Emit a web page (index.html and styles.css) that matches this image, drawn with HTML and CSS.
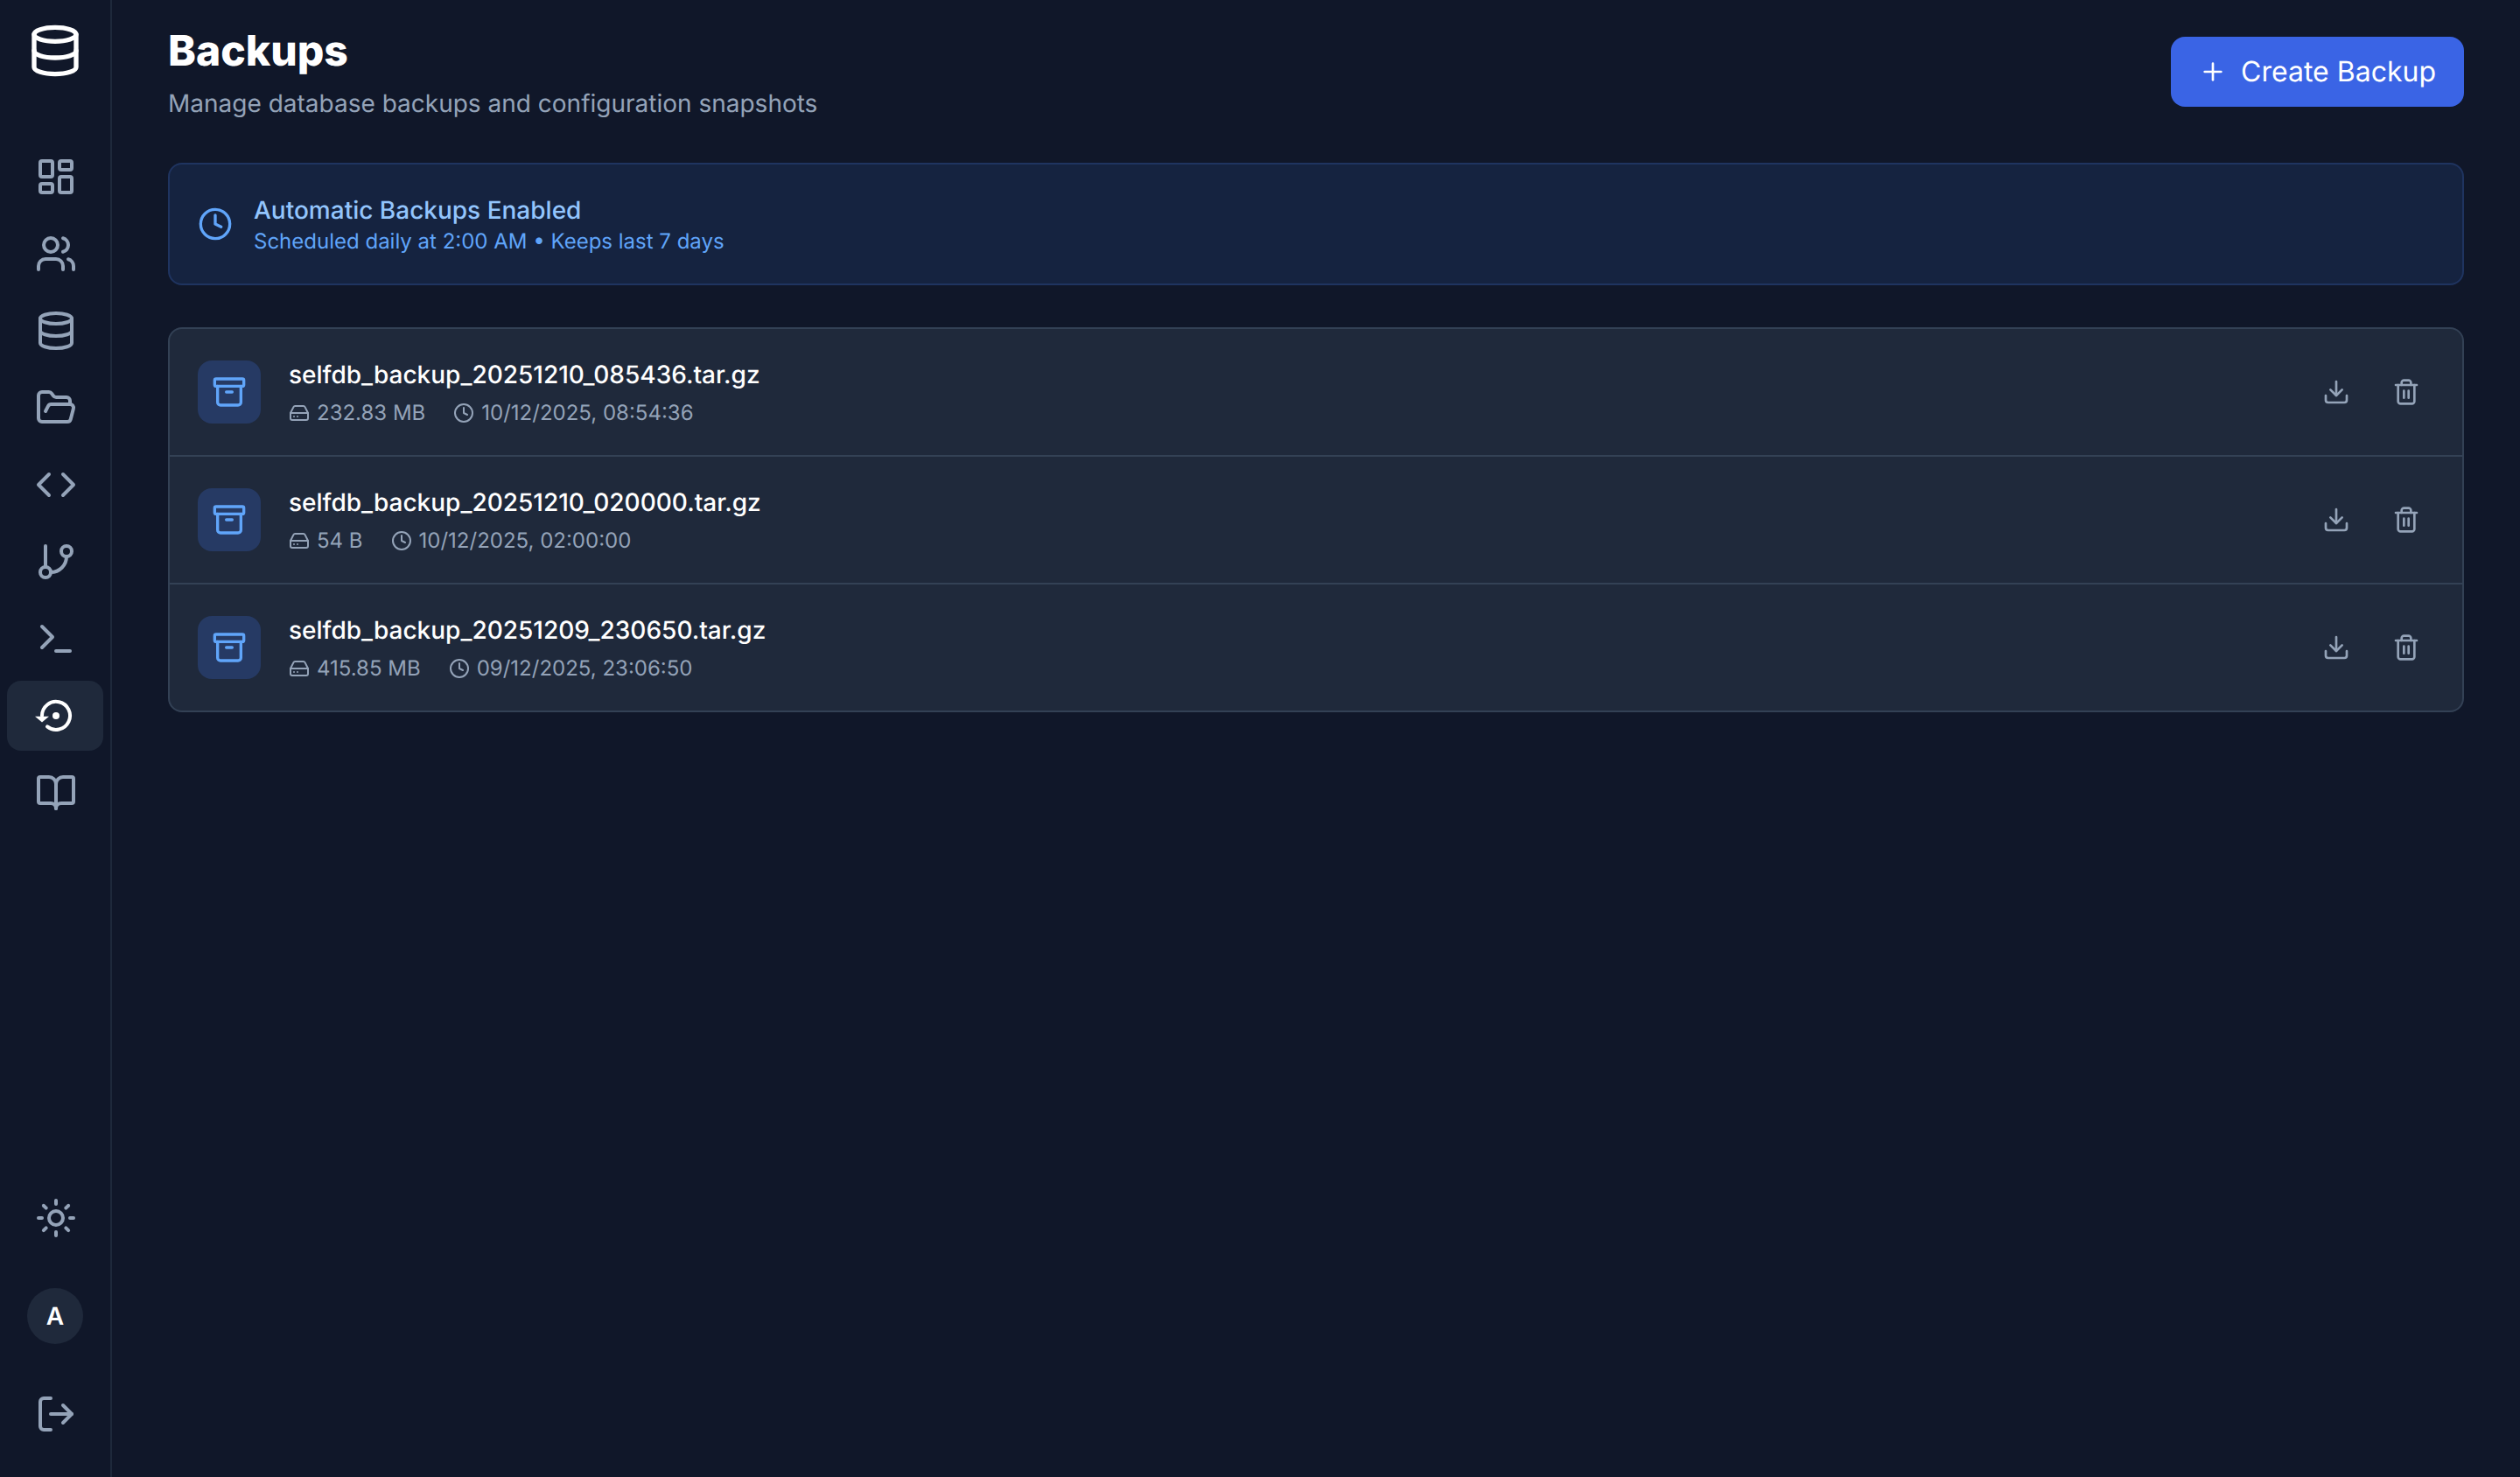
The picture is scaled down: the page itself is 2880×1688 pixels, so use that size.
FILE: index.html
```html
<!DOCTYPE html>
<html lang="en">
<head>
<meta charset="utf-8">
<title>Backups</title>
<link rel="stylesheet" href="styles.css">
</head>
<body>
<div class="app">
  <aside class="sidebar">
    <div class="logo">
      <svg class="ic ic-64" viewBox="0 0 24 24"><ellipse cx="12" cy="5" rx="9" ry="3"/><path d="M3 5v14a9 3 0 0 0 18 0V5"/><path d="M3 12a9 3 0 0 0 18 0"/></svg>
    </div>
    <nav class="nav">
      <a class="nav-btn"><svg class="ic ic-48" viewBox="0 0 24 24"><rect x="3" y="3" width="7" height="9" rx="1"/><rect x="14" y="3" width="7" height="5" rx="1"/><rect x="14" y="12" width="7" height="9" rx="1"/><rect x="3" y="16" width="7" height="5" rx="1"/></svg></a>
      <a class="nav-btn"><svg class="ic ic-48" viewBox="0 0 24 24"><path d="M16 21v-2a4 4 0 0 0-4-4H6a4 4 0 0 0-4 4v2"/><circle cx="9" cy="7" r="4"/><path d="M22 21v-2a4 4 0 0 0-3-3.87"/><path d="M16 3.13a4 4 0 0 1 0 7.75"/></svg></a>
      <a class="nav-btn"><svg class="ic ic-48" viewBox="0 0 24 24"><ellipse cx="12" cy="5" rx="9" ry="3"/><path d="M3 5v14a9 3 0 0 0 18 0V5"/><path d="M3 12a9 3 0 0 0 18 0"/></svg></a>
      <a class="nav-btn"><svg class="ic ic-48" viewBox="0 0 24 24"><path d="m6 14 1.5-2.9A2 2 0 0 1 9.24 10H20a2 2 0 0 1 1.94 2.5l-1.54 6a2 2 0 0 1-1.95 1.5H4a2 2 0 0 1-2-2V5a2 2 0 0 1 2-2h3.9a2 2 0 0 1 1.69.9l.81 1.2a2 2 0 0 0 1.67.9H18a2 2 0 0 1 2 2v2"/></svg></a>
      <a class="nav-btn"><svg class="ic ic-48" viewBox="0 0 24 24"><path d="m16 18 6-6-6-6"/><path d="m8 6-6 6 6 6"/></svg></a>
      <a class="nav-btn"><svg class="ic ic-48" viewBox="0 0 24 24"><path d="M6 3v12"/><circle cx="18" cy="6" r="3"/><circle cx="6" cy="18" r="3"/><path d="M18 9a9 9 0 0 1-9 9"/></svg></a>
      <a class="nav-btn"><svg class="ic ic-48" viewBox="0 0 24 24"><path d="m4 17 6-6-6-6"/><path d="M12 19h8"/></svg></a>
      <a class="nav-btn active"><svg class="ic ic-48" viewBox="0 0 24 24"><path d="M7 18.2A8 8 0 1 0 4 12"/><path class="fill" d="M0 12.4h8l-4 3.4z"/><circle class="fill" cx="12" cy="12" r="2"/></svg></a>
      <a class="nav-btn"><svg class="ic ic-48" viewBox="0 0 24 24"><path d="M12 7v14"/><path d="M3 18a1 1 0 0 1-1-1V4a1 1 0 0 1 1-1h5a4 4 0 0 1 4 4 4 4 0 0 1 4-4h5a1 1 0 0 1 1 1v13a1 1 0 0 1-1 1h-6a3 3 0 0 0-3 3 3 3 0 0 0-3-3z"/></svg></a>
    </nav>
    <div class="side-foot">
      <a class="nav-btn"><svg class="ic ic-48" viewBox="0 0 24 24"><circle cx="12" cy="12" r="4"/><path d="M12 2v2"/><path d="M12 20v2"/><path d="m4.93 4.93 1.41 1.41"/><path d="m17.66 17.66 1.41 1.41"/><path d="M2 12h2"/><path d="M20 12h2"/><path d="m6.34 17.66-1.41 1.41"/><path d="m19.07 4.93-1.41 1.41"/></svg></a>
      <div class="avatar-wrap"><div class="avatar">A</div></div>
      <a class="nav-btn"><svg class="ic ic-48" viewBox="0 0 24 24"><path d="M9 21H5a2 2 0 0 1-2-2V5a2 2 0 0 1 2-2h4"/><path d="m16 17 5-5-5-5"/><path d="M21 12H9"/></svg></a>
    </div>
  </aside>
  <main class="main">
    <header class="head">
      <div class="head-text">
        <h1 class="title">Backups</h1>
        <p class="subtitle">Manage database backups and configuration snapshots</p>
      </div>
      <button class="primary"><svg class="ic ic-32" viewBox="0 0 24 24"><path d="M5 12h14"/><path d="M12 5v14"/></svg><span>Create Backup</span></button>
    </header>
    <section class="banner">
      <svg class="ic ic-40 blue" viewBox="0 0 24 24"><circle cx="12" cy="12" r="10"/><path d="M12 6v6l4 2"/></svg>
      <div class="banner-text">
        <div class="banner-title">Automatic Backups Enabled</div>
        <div class="banner-sub">Scheduled daily at 2:00 AM • Keeps last 7 days</div>
      </div>
    </section>
    <section class="list">
      <article class="row">
        <div class="box"><svg class="ic ic-40 blue" viewBox="0 0 24 24"><rect x="2" y="3" width="20" height="5" rx="1"/><path d="M4 8v11a2 2 0 0 0 2 2h12a2 2 0 0 0 2-2V8"/><path d="M10 12h4"/></svg></div>
        <div class="info">
          <div class="name">selfdb_backup_20251210_085436.tar.gz</div>
          <div class="meta">
            <span class="meta-item"><svg class="ic ic-24" viewBox="0 0 24 24"><path d="M22 12H2"/><path d="M5.45 5.11 2 12v6a2 2 0 0 0 2 2h16a2 2 0 0 0 2-2v-6l-3.45-6.89A2 2 0 0 0 16.76 4H7.24a2 2 0 0 0-1.79 1.11z"/><path d="M6 16h.01"/><path d="M10 16h.01"/></svg>232.83 MB</span>
            <span class="meta-item"><svg class="ic ic-24" viewBox="0 0 24 24"><circle cx="12" cy="12" r="10"/><path d="M12 6v6l4 2"/></svg>10/12/2025, 08:54:36</span>
          </div>
        </div>
        <div class="actions">
          <a class="act"><svg class="ic ic-32" viewBox="0 0 24 24"><path d="M21 15v4a2 2 0 0 1-2 2H5a2 2 0 0 1-2-2v-4"/><path d="m7 10 5 5 5-5"/><path d="M12 15V3"/></svg></a>
          <a class="act"><svg class="ic ic-32" viewBox="0 0 24 24"><path d="M3 6h18"/><path d="M19 6v14c0 1-1 2-2 2H7c-1 0-2-1-2-2V6"/><path d="M8 6V4c0-1 1-2 2-2h4c1 0 2 1 2 2v2"/><path d="M10 11v6"/><path d="M14 11v6"/></svg></a>
        </div>
      </article>
      <article class="row">
        <div class="box"><svg class="ic ic-40 blue" viewBox="0 0 24 24"><rect x="2" y="3" width="20" height="5" rx="1"/><path d="M4 8v11a2 2 0 0 0 2 2h12a2 2 0 0 0 2-2V8"/><path d="M10 12h4"/></svg></div>
        <div class="info">
          <div class="name">selfdb_backup_20251210_020000.tar.gz</div>
          <div class="meta">
            <span class="meta-item"><svg class="ic ic-24" viewBox="0 0 24 24"><path d="M22 12H2"/><path d="M5.45 5.11 2 12v6a2 2 0 0 0 2 2h16a2 2 0 0 0 2-2v-6l-3.45-6.89A2 2 0 0 0 16.76 4H7.24a2 2 0 0 0-1.79 1.11z"/><path d="M6 16h.01"/><path d="M10 16h.01"/></svg>54 B</span>
            <span class="meta-item"><svg class="ic ic-24" viewBox="0 0 24 24"><circle cx="12" cy="12" r="10"/><path d="M12 6v6l4 2"/></svg>10/12/2025, 02:00:00</span>
          </div>
        </div>
        <div class="actions">
          <a class="act"><svg class="ic ic-32" viewBox="0 0 24 24"><path d="M21 15v4a2 2 0 0 1-2 2H5a2 2 0 0 1-2-2v-4"/><path d="m7 10 5 5 5-5"/><path d="M12 15V3"/></svg></a>
          <a class="act"><svg class="ic ic-32" viewBox="0 0 24 24"><path d="M3 6h18"/><path d="M19 6v14c0 1-1 2-2 2H7c-1 0-2-1-2-2V6"/><path d="M8 6V4c0-1 1-2 2-2h4c1 0 2 1 2 2v2"/><path d="M10 11v6"/><path d="M14 11v6"/></svg></a>
        </div>
      </article>
      <article class="row">
        <div class="box"><svg class="ic ic-40 blue" viewBox="0 0 24 24"><rect x="2" y="3" width="20" height="5" rx="1"/><path d="M4 8v11a2 2 0 0 0 2 2h12a2 2 0 0 0 2-2V8"/><path d="M10 12h4"/></svg></div>
        <div class="info">
          <div class="name">selfdb_backup_20251209_230650.tar.gz</div>
          <div class="meta">
            <span class="meta-item"><svg class="ic ic-24" viewBox="0 0 24 24"><path d="M22 12H2"/><path d="M5.45 5.11 2 12v6a2 2 0 0 0 2 2h16a2 2 0 0 0 2-2v-6l-3.45-6.89A2 2 0 0 0 16.76 4H7.24a2 2 0 0 0-1.79 1.11z"/><path d="M6 16h.01"/><path d="M10 16h.01"/></svg>415.85 MB</span>
            <span class="meta-item"><svg class="ic ic-24" viewBox="0 0 24 24"><circle cx="12" cy="12" r="10"/><path d="M12 6v6l4 2"/></svg>09/12/2025, 23:06:50</span>
          </div>
        </div>
        <div class="actions">
          <a class="act"><svg class="ic ic-32" viewBox="0 0 24 24"><path d="M21 15v4a2 2 0 0 1-2 2H5a2 2 0 0 1-2-2v-4"/><path d="m7 10 5 5 5-5"/><path d="M12 15V3"/></svg></a>
          <a class="act"><svg class="ic ic-32" viewBox="0 0 24 24"><path d="M3 6h18"/><path d="M19 6v14c0 1-1 2-2 2H7c-1 0-2-1-2-2V6"/><path d="M8 6V4c0-1 1-2 2-2h4c1 0 2 1 2 2v2"/><path d="M10 11v6"/><path d="M14 11v6"/></svg></a>
        </div>
      </article>
    </section>
  </main>
</div>
</body>
</html>
```

FILE: styles.css
```css
* { box-sizing: border-box; }
html, body { margin: 0; padding: 0; height: 100%; }
body {
  background: #101729;
  color: #fff;
  font-family: Inter, "Liberation Sans", sans-serif;
  text-rendering: geometricPrecision;
  overflow: hidden;
}
.app { display: flex; height: 1688px; }

.ic {
  display: block;
  flex: none;
  fill: none;
  stroke: currentColor;
  stroke-width: 2;
  stroke-linecap: round;
  stroke-linejoin: round;
}
.ic .fill { fill: currentColor; stroke: none; }
.ic-64 { width: 64px; height: 64px; }
.ic-48 { width: 48px; height: 48px; }
.ic-40 { width: 40px; height: 40px; }
.ic-32 { width: 32px; height: 32px; }
.ic-24 { width: 24px; height: 24px; }
.blue { color: #60a5fa; }

.sidebar {
  width: 128px;
  flex: none;
  display: flex;
  flex-direction: column;
  padding: 26px 8px 32px;
  border-right: 2px solid #1e293b;
}
.logo { display: flex; justify-content: center; color: #fff; margin-bottom: 72px; }
.nav { display: flex; flex-direction: column; gap: 8px; }
.nav-btn {
  display: flex;
  width: 110px;
  height: 80px;
  padding: 16px 32px;
  border-radius: 16px;
  color: #94a3b8;
}
.nav-btn.active { background: #1f293b; color: #fff; }
.side-foot { margin-top: auto; display: flex; flex-direction: column; gap: 8px; }
.avatar-wrap { display: flex; justify-content: center; padding: 32px 0; }
.avatar {
  width: 64px;
  height: 64px;
  border-radius: 50%;
  background: #1f293b;
  display: flex;
  align-items: center;
  justify-content: center;
  font-size: 28px;
  font-weight: 600;
}

.main { flex: 1; min-width: 0; padding: 26px 64px 0; }
.head { display: flex; justify-content: space-between; align-items: center; margin-bottom: 48px; }
.title {
  margin: 0;
  font-size: 48px;
  line-height: 64px;
  font-weight: 800;
}
.subtitle { margin: 8px 0 0; font-size: 28px; line-height: 40px; color: #94a3b8; }
.primary {
  display: flex;
  align-items: center;
  gap: 16px;
  height: 80px;
  padding: 0 32px;
  border: 0;
  border-radius: 16px;
  background: #3a64e5;
  color: #fff;
  font: 400 32px/48px Inter, "Liberation Sans", sans-serif;
  text-rendering: geometricPrecision;
}

.banner {
  display: flex;
  align-items: center;
  gap: 24px;
  height: 140px;
  padding: 0 32px;
  margin-bottom: 48px;
  border: 2px solid #1f3460;
  border-radius: 16px;
  background: #152340;
}
.banner-title { font-size: 28px; line-height: 40px; font-weight: 500; color: #93c5fd; }
.banner-sub { font-size: 24px; line-height: 32px; color: #60a5fa; }

.list {
  border: 2px solid #334155;
  border-radius: 16px;
  background: #1f293b;
  overflow: hidden;
}
.row {
  display: flex;
  align-items: center;
  gap: 32px;
  height: 146px;
  padding: 0 32px;
  border-bottom: 2px solid #334155;
}
.row:last-child { border-bottom: 0; height: 144px; }
.box {
  width: 72px;
  height: 72px;
  flex: none;
  display: flex;
  align-items: center;
  justify-content: center;
  border-radius: 16px;
  background: #263a64;
}
.info { flex: 1; min-width: 0; padding-top: 4px; }
.name { font-size: 28px; line-height: 40px; font-weight: 500; color: #fff; }
.meta { display: flex; gap: 32px; margin-top: 4px; font-size: 24px; line-height: 40px; color: #94a3b8; }
.meta-item { display: flex; align-items: center; gap: 8px; }
.actions { display: flex; gap: 16px; }
.act { display: block; padding: 16px; color: #94a3b8; }
```
